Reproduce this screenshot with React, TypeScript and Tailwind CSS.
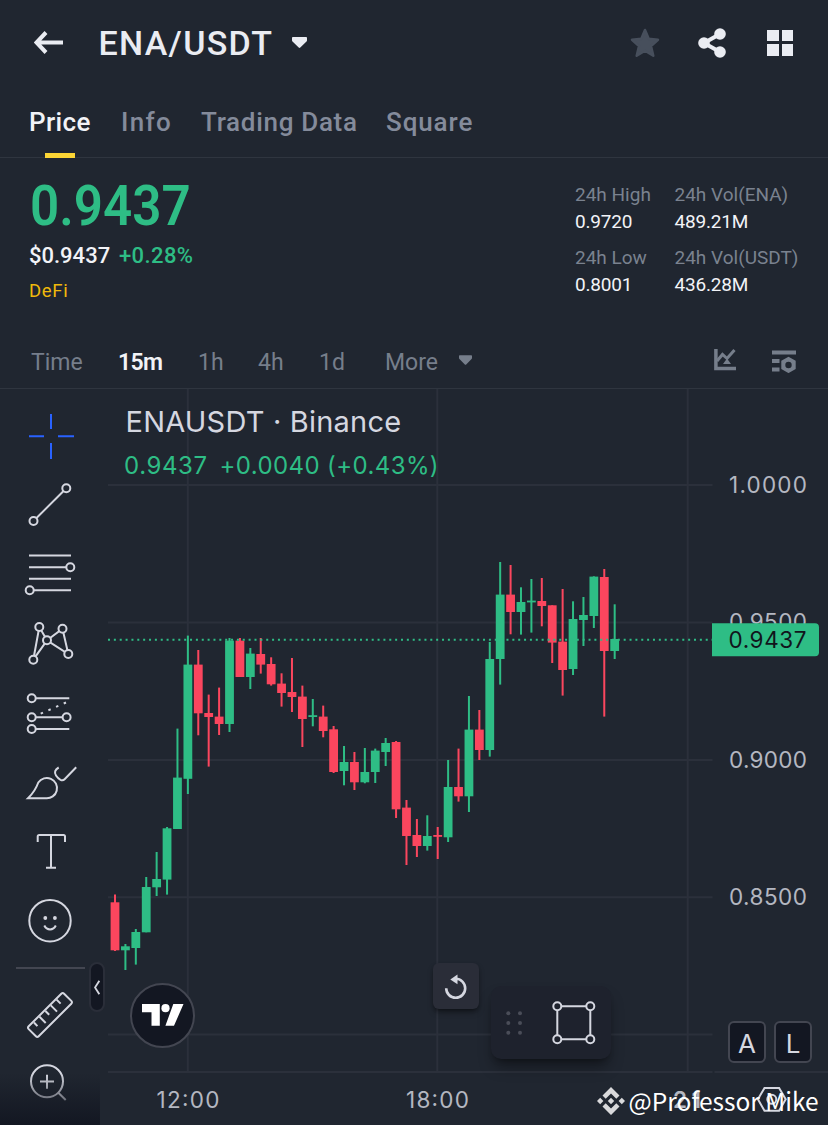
import type { ReactNode } from "react";
import clsx from "clsx";

type Side = "up" | "down";
// [high, low, body top, body bottom, side]
type Candle = [number, number, number, number, Side];

const CANDLES: Candle[] = [
    [894.5, 951, 902.3, 950.3, "down"],
    [944, 970, 946.3, 950.3, "up"],
    [929, 964.6, 932, 948, "up"],
    [877, 932.3, 887, 932.3, "up"],
    [852, 896, 879, 887.3, "up"],
    [827, 894.6, 828.3, 879.6, "up"],
    [728.6, 829, 777.6, 829, "up"],
    [635.6, 794, 664.6, 778.8, "up"],
    [650, 735.3, 664.6, 713.3, "down"],
    [694.6, 766.6, 713, 717, "down"],
    [687.6, 735, 716.6, 724, "down"],
    [638, 732, 640.6, 724, "up"],
    [638, 677, 640.6, 677, "down"],
    [648, 689, 653.6, 677, "up"],
    [638, 673.6, 654, 664.6, "down"],
    [657.3, 685.6, 664, 684.3, "down"],
    [673.3, 706.6, 683.6, 693, "down"],
    [658, 712, 692, 697, "down"],
    [685.6, 747, 696.6, 719, "down"],
    [699, 726.3, 715.2, 717, "up"],
    [705.6, 737.3, 716.6, 731, "down"],
    [726, 773, 729.3, 772, "down"],
    [746, 785.3, 762, 771, "up"],
    [752, 790, 762, 782.3, "down"],
    [748, 783.3, 772, 782.3, "up"],
    [748.6, 783, 750.6, 772, "up"],
    [738, 766, 743, 752, "up"],
    [741, 818, 742, 809.3, "down"],
    [800, 865, 807.6, 836, "down"],
    [819, 857, 835, 846, "down"],
    [815.3, 850.6, 836, 846, "up"],
    [827, 859, 835, 836.8, "down"],
    [760, 842, 787, 837.3, "up"],
    [748.6, 801.6, 787, 796.3, "down"],
    [696, 812, 729.6, 796.3, "up"],
    [710, 760, 729.6, 750, "down"],
    [642, 756.6, 659, 750, "up"],
    [562, 684.6, 594.6, 659, "up"],
    [565, 634.3, 594.6, 612, "down"],
    [587.3, 634.6, 602, 612, "up"],
    [579, 632.6, 600.6, 602.4, "up"],
    [578, 626.3, 601, 606, "down"],
    [605.3, 663, 605.3, 642.6, "down"],
    [589, 695.6, 641.6, 670, "down"],
    [601.3, 675, 619, 669, "up"],
    [597, 646, 615, 620, "up"],
    [576.3, 628, 576.6, 616, "up"],
    [569, 716.6, 577, 651, "down"],
    [604.3, 659, 639, 651, "up"],
];

const PRICE_LINES = [485, 622.5, 760, 897.3, 1034.5];
const TIME_LINES = [187.8, 437.3, 687.7];

const PRICE_LABELS = [
    { text: "1.0000", y: 493 },
    { text: "0.9500", y: 630 },
    { text: "0.9000", y: 767.6 },
    { text: "0.8500", y: 905 },
];

const Tool = ({ children, className }: { children: ReactNode; className?: string }) => (
    <svg
        viewBox="0 0 69 69"
        className={clsx("size-[69px] shrink-0", className ?? "text-[#d5d7e0]")}
        fill="none"
        stroke="currentColor"
        strokeWidth="2"
    >
        {children}
    </svg>
);

const Ring = ({ x, y }: { x: number; y: number }) => <circle cx={x} cy={y} r="4" className="fill-[#202630]" />;

const Caret = ({ className }: { className: string }) => (
    <svg viewBox="0 0 15 11" className={className} fill="currentColor">
        <path d="M.8 0h13.400c.5 0 .8.4.8.9v2.300c0 .5-.2.9-.5 1.200L8.300 10.600c-.5.5-1.100.5-1.600 0L.5 4.400C.2 4.100 0 3.700 0 3.200V.9C0 .4.3 0 .8 0z" />
    </svg>
);

const Header = () => (
    <header className="flex h-[85px] shrink-0 items-center text-[#eaecf2]">
        <svg viewBox="0 0 30 24" className="ml-[34px] h-6 w-[30px]" fill="none" stroke="currentColor" strokeWidth="4">
            <path d="M29 11.500H3M12 1.500L2.500 11.500L12 21.500" />
        </svg>
        <h1 className="ml-[34.5px] w-[178px] pt-px text-[34px] font-medium tracking-[1.3px] whitespace-nowrap">ENA/USDT</h1>
        <Caret className="ml-[15.5px] h-[11px] w-[15px]" />
        <div className="mr-[35px] ml-auto flex items-center">
            <svg viewBox="0 0 30 30" className="size-[30px] text-[#474f5c]" fill="currentColor" stroke="currentColor" strokeWidth="2.500" strokeLinejoin="round">
                <path d="M15 2l3.700 8.800 9.300.9-7 6.300 2.300 9.800L15 22.800l-8.300 5 2.300-9.800-7-6.300 9.300-.9z" />
            </svg>
            <svg viewBox="0 0 28 30" className="ml-[38px] h-[30px] w-7" fill="currentColor">
                <path d="M6 15L22 6M6 15l16 9" stroke="currentColor" strokeWidth="4" />
                <circle cx="6" cy="15" r="5.800" />
                <circle cx="22" cy="6" r="5.800" />
                <circle cx="22" cy="24" r="5.800" />
            </svg>
            <div className="ml-[41px] grid grid-cols-2 gap-[3px]">
                <i className="size-[11.5px] bg-current" />
                <i className="size-[11.5px] bg-current" />
                <i className="size-[11.5px] bg-current" />
                <i className="size-[11.5px] bg-current" />
            </div>
        </div>
    </header>
);

const Tabs = () => (
    <nav className="flex h-[73px] shrink-0 items-center border-b border-[#2f353f] pl-[29px] text-[26px] font-medium whitespace-nowrap text-[#848b9b]">
        <span className="relative flex h-full w-[92px] items-center text-[#f2f3f7]">
            <span className="pt-[2px] tracking-[0.4px]">Price</span>
            <i className="absolute -bottom-px left-4 h-[5.5px] w-[30px] bg-[#fcd535]" />
        </span>
        <span className="w-[80px] pt-[2px] tracking-[1.3px]">Info</span>
        <span className="w-[185px] pt-[2px] tracking-[0.7px]">Trading Data</span>
        <span className="pt-[2px] tracking-[0.9px]">Square</span>
    </nav>
);

const Stat = ({ label, value }: { label: string; value: string }) => (
    <div className="flex flex-col text-[19px] leading-[27px] whitespace-nowrap">
        <span className="text-[#7a828f]">{label}</span>
        <span className="tracking-[-0.2px] text-[#f2f3f7]">{value}</span>
    </div>
);

const Summary = () => (
    <section className="flex h-[178px] shrink-0 justify-between pl-[29px]">
        <div className="pt-[23px] whitespace-nowrap">
            <div className="ml-px w-fit origin-left scale-x-[0.93] text-[55px] leading-[50px] font-semibold text-[#2ebd85]">
                0.9437
            </div>
            <div className="mt-[13px] flex gap-[9px] text-[22px] leading-6 font-medium">
                <span className="w-[81px] text-[#f2f3f7]">$0.9437</span>
                <span className="tracking-[0.4px] text-[#2ebd85]">+0.28%</span>
            </div>
            <div className="mt-[13px] text-[18.5px] leading-5 tracking-[0.7px] text-[#f0b90b]">DeFi</div>
        </div>
        <div className="grid h-fit w-[253px] grid-cols-[99.500px_1fr] gap-y-[9px] pt-[23px]">
            <Stat label="24h High" value="0.9720" />
            <Stat label="24h Vol(ENA)" value="489.21M" />
            <Stat label="24h Low" value="0.8001" />
            <Stat label="24h Vol(USDT)" value="436.28M" />
        </div>
    </section>
);

const Intervals = () => (
    <div className="flex h-[53px] shrink-0 items-center border-b border-[#2f353f] pl-[31px] text-[23px] whitespace-nowrap text-[#767e8b]">
        <span className="w-[87px] pt-[2px]">Time</span>
        <span className="w-[80px] pt-[2px] font-semibold tracking-[-0.7px] text-[#f2f3f7]">15m</span>
        <span className="w-[60px] pt-[2px]">1h</span>
        <span className="w-[61px] pt-[2px]">4h</span>
        <span className="w-[66px] pt-[2px]">1d</span>
        <span className="w-[74px] pt-[2px]">More</span>
        <Caret className="mb-[5px] h-[10px] w-[13px]" />
        <svg viewBox="0 0 22 22" className="mr-[36.5px] mb-1 ml-auto h-[22px] w-[22px]" fill="none" stroke="currentColor" strokeWidth="3.500">
            <path d="M1.900 0v19.600H22" />
            <path d="M3 12l5.500-6.500 4.500 4L20.500 1" strokeWidth="3" />
            <path d="M13 9.500l4 5.500h-8z" fill="currentColor" stroke="none" />
        </svg>
        <svg viewBox="0 0 25 23" className="mr-[31px] mb-[2px] h-[23px] w-[25px]" fill="currentColor">
            <path d="M0 .5h24v4H0zM0 9h7.500v4H0zM0 17.500h7.500v4H0z" />
            <path fillRule="evenodd" d="M16.500 6.800l7.200 4v8.200l-7.200 4.100-7.200-4.100v-8.200zM16.500 11.800a3.200 3.200 0 1 0 0 6.400a3.200 3.200 0 1 0 0-6.400z" />
        </svg>
    </div>
);

const DrawingTools = () => (
    <aside className="relative flex w-[100px] shrink-0 flex-col items-center pt-[12px]">
        <Tool className="text-[#2962ff]">
            <path d="M35 13v15M35 42v16M13 35.300h15M42 35.300h16" />
        </Tool>
        <Tool>
            <path d="M17.500 51L50.300 18.300" />
            <Ring x={17.5} y={51} />
            <Ring x={50.3} y={18.3} />
        </Tool>
        <Tool>
            <path d="M13 16.500h42M13 28.300h42M13 39.800h42M13 51.300h42" />
            <Ring x={54.3} y={28.3} />
            <Ring x={13.7} y={51.3} />
        </Tool>
        <Tool>
            <path d="M17.300 51.700L23.300 19L31 32.300L46.500 20.700L52.300 46L31 32.300z" />
            <Ring x={23.3} y={19} />
            <Ring x={46.5} y={20.7} />
            <Ring x={31} y={32.3} />
            <Ring x={17.3} y={51.7} />
            <Ring x={52.3} y={46} />
        </Tool>
        <Tool>
            <path d="M15.700 21.300h37.600M15.700 40.300h35M15.700 52h37.600" />
            <path d="M24.700 36.700L50 25.500" strokeDasharray="2.500 5.900" />
            <Ring x={15.7} y={21.3} />
            <Ring x={15.7} y={40.3} />
            <Ring x={50.6} y={40.3} />
            <Ring x={15.7} y={52} />
        </Tool>
        <Tool>
            <path d="M12 52.300H30A10.200 10.200 0 1 0 22.300 36.500C20.500 41.500 18 46.500 12 52.300z" />
            <path d="M42.700 21.500C39 23.500 38 26.500 40 29.500C41 31 43 33 44.500 33.800C46 34.500 47.500 34.300 48.600 33.200L60.200 21.200" />
        </Tool>
        <Tool>
            <path d="M21.700 27v-5.500q0-1.500 1.500-1.500h24.300q1.500 0 1.500 1.500V27M35 20v32.700M30 52.700h10" />
        </Tool>
        <Tool>
            <circle cx="34" cy="36.700" r="20.700" />
            <circle cx="29.300" cy="34" r="1.900" fill="currentColor" stroke="none" />
            <circle cx="38.900" cy="34" r="1.900" fill="currentColor" stroke="none" />
            <path d="M28.300 41.500c2.500 5.200 9 5.200 11.500 0" />
        </Tool>
        <hr className="mt-[13.5px] mb-[12.5px] w-[69px] border-t-2 border-[#434651]" />
        <Tool>
            <path d="M45.300 12.700q1.400-1.400 2.800 0l7.200 7.200q1.400 1.400 0 2.800L22.700 55.300q-1.400 1.400-2.800 0L12.700 48.100q-1.400-1.400 0-2.800z" />
            <path d="M18 41.500l3.400 3.600M23.500 35.800l6.200 6.200M29.400 30l3.800 3.800M34.800 24.400l6.200 6.200M40.600 18.600l4 4" />
        </Tool>
        <svg viewBox="0 0 69 69" className="-mt-px size-[69px] shrink-0 text-[#d5d7e0]" fill="none" stroke="currentColor" strokeWidth="2">
            <circle cx="31" cy="32.300" r="16" />
            <path d="M24 32.500h14M31 25.700v14M42.300 43.700l7.400 7.300" />
        </svg>
        <div className="absolute bottom-0 left-0 h-[52px] w-full bg-linear-to-b from-transparent to-[#131722]" />
        <div className="absolute top-[573px] left-[89px] z-10 flex h-[50px] w-4 items-center justify-center rounded-full border-2 border-[#2a2e39] bg-[#131722]">
            <svg viewBox="0 0 6 15" className="h-[15px] w-[6px] shrink-0 text-[#d5d7e0]" fill="none" stroke="currentColor" strokeWidth="1.800">
                <path d="M5.300.8L1 7.500l4.300 6.700" />
            </svg>
        </div>
    </aside>
);

const CandleChart = () => (
    <svg viewBox="100 389 728 736" className="block h-[736px] w-[728px]" fontFamily="Inter, sans-serif" fontSize="22.500">
        <g stroke="#2b303b" strokeWidth="2">
            {PRICE_LINES.map((y) => (
                <path key={y} d={`M108 ${y}H712.500`} />
            ))}
            {TIME_LINES.map((x) => (
                <path key={x} d={`M${x} 389V1071`} />
            ))}
            <path d="M108 1072H712.500M714.500 1072H828" />
        </g>
        {CANDLES.map(([high, low, top, bottom, side], i) => {
            const x = 115 + i * 10.41;
            return (
                <g key={i} className={side === "up" ? "fill-[#2ebd85]" : "fill-[#fb465e]"}>
                    <rect x={x - 1} y={high} width="2" height={low - high} />
                    <rect x={x - 4.4} y={top} width="8.800" height={bottom - top} />
                </g>
            );
        })}
        <path d="M108 639.700H712" stroke="#2ebd85" strokeWidth="2" strokeDasharray="2 3.860" />
        <g fill="#b4b7c1">
            {PRICE_LABELS.map(({ text, y }) => (
                <text key={text} x="729" y={y} textLength="78">
                    {text}
                </text>
            ))}
            <text x="156.500" y="1107.700" textLength="63">12:00</text>
            <text x="406" y="1107.700" textLength="63">18:00</text>
            <text x="673" y="1107.700" textLength="28" fontWeight="600">21</text>
        </g>
        <path d="M712 623.300h103q4 0 4 4v25q0 4-4 4H712z" fill="#2ebd85" />
        <text x="728.500" y="647.800" textLength="78" fill="#11151c">0.9437</text>
        <g fill="none" stroke="#d5d7e0" strokeWidth="2">
            <path d="M764.500 1088h14.600l6.600 11.300-6.600 11.500h-14.600l-6.600-11.500z" />
            <circle cx="771.800" cy="1099.300" r="4.500" />
        </g>
    </svg>
);

const ScaleButton = ({ children }: { children: string }) => (
    <button className="flex h-[42px] w-[38px] items-center justify-center rounded-md border-2 border-[#434651] bg-[#131722] pt-[2px] text-[26px] text-[#d5d7e0]">
        {children}
    </button>
);

const Chart = () => (
    <div className="relative w-[728px] font-['Inter',sans-serif]">
        <CandleChart />

        <div className="absolute top-[14px] left-[24px] whitespace-nowrap">
            <div className="pl-[1.500px] text-[29px] leading-[38px] tracking-[0.2px] text-[#d5d7e0]">ENAUSDT · Binance</div>
            <div className="mt-[6px] flex text-[24px] leading-[38px] text-[#2ebd85]">
                <span className="w-[95.5px] tracking-[0.6px]">0.9437</span>
                <span className="tracking-[0.4px]">+0.0040 (+0.43%)</span>
            </div>
        </div>

        {/* TradingView badge */}
        <div className="absolute top-[593.5px] left-[30px] flex size-[65px] items-center justify-center rounded-full border-2 border-[#434651] bg-[#131722]">
            <svg viewBox="0 0 42 22" className="h-[22px] w-[42px]" fill="#fff">
                <path d="M0 0h17.800v21.800H9.500V8.200H0zM31.300 0h10.200L32 21.800H23.400z" />
                <circle cx="23.500" cy="4.200" r="4.100" />
            </svg>
        </div>

        {/* reset view */}
        <button className="absolute top-[574px] left-[333px] size-[46px] rounded-md bg-[#2a2d38] shadow-md shadow-black/40">
            <svg viewBox="0 0 46 46" className="size-[46px]" fill="none" stroke="#d5d7e0" strokeWidth="2.600">
                <path d="M13.200 25.300a9.500 9.500 0 1 0 9.500-9.500" />
                <path d="M17.300 16.500l7.200-5v9.800z" fill="#d5d7e0" stroke="none" />
            </svg>
        </button>

        {/* floating favourites bar */}
        <div className="absolute top-[597px] left-[391px] h-[73px] w-[119.500px] rounded-[10px] bg-[#1e222d] shadow-lg shadow-black/40">
            <svg viewBox="491 986 119.500 73" className="h-[73px] w-[119.500px]" fill="none" stroke="#d5d7e0" strokeWidth="2">
                <g fill="#4a4d58" stroke="none">
                    {[1013.3, 1023, 1032.7].map((y) => (
                        <g key={y}>
                            <circle cx="508.300" cy={y} r="2" />
                            <circle cx="520" cy={y} r="2" />
                        </g>
                    ))}
                </g>
                <path d="M557.300 1006.300H590.300V1039.300H557.300z" />
                <g fill="#1e222d">
                    <circle cx="557.300" cy="1006.300" r="4" />
                    <circle cx="590.300" cy="1006.300" r="4" />
                    <circle cx="557.300" cy="1039.300" r="4" />
                    <circle cx="590.300" cy="1039.300" r="4" />
                </g>
            </svg>
        </div>

        <div className="absolute top-[632px] left-[628px] flex gap-2">
            <ScaleButton>A</ScaleButton>
            <ScaleButton>L</ScaleButton>
        </div>

        {/* author signature */}
        <div className="absolute top-[693.5px] left-[497px] flex items-center gap-[3.5px] whitespace-nowrap">
            <svg viewBox="0 0 28 28" className="size-7" fill="#d9d9db">
                <path d="M14 0l8.500 8.500-3.200 3.200L14 6.400l-5.300 5.300-3.200-3.200zM14 28l8.500-8.500-3.200-3.200L14 21.600l-5.300-5.300-3.200 3.200zM3.200 10.800L6.400 14l-3.200 3.200L0 14zM24.800 10.800L28 14l-3.200 3.200-3.200-3.200zM14 10.800l3.200 3.200-3.200 3.200-3.200-3.200z" />
            </svg>
            <span className="font-['Noto_Sans_CJK_SC','Noto_Sans',sans-serif] text-[24.5px] leading-9 font-normal text-white">
                @Professor Mike
            </span>
        </div>
    </div>
);

export default function App() {
    return (
        <main className="flex h-[1125px] w-[828px] flex-col overflow-hidden bg-[#202630] font-['Roboto',sans-serif]">
            <Header />
            <Tabs />
            <Summary />
            <Intervals />
            <div className="flex h-[736px] shrink-0">
                <DrawingTools />
                <Chart />
            </div>
        </main>
    );
}
